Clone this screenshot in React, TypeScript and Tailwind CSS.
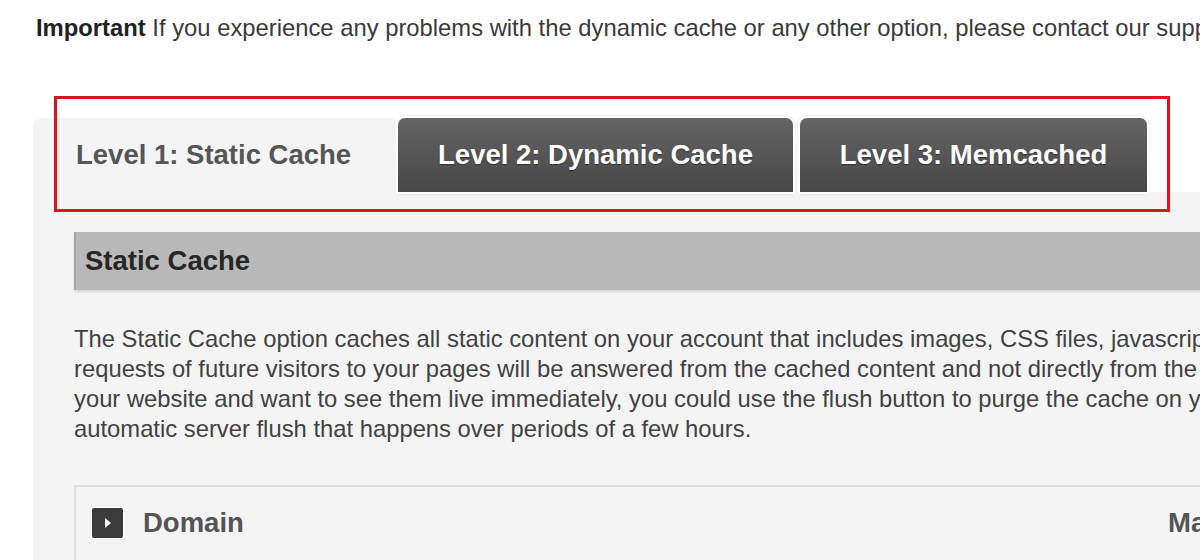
import React from "react";

const lines = [
  "The Static Cache option caches all static content on your account that includes images, CSS files, javascript files and others. This means that",
  "requests of future visitors to your pages will be answered from the cached content and not directly from the server. If you have made changes on",
  "your website and want to see them live immediately, you could use the flush button to purge the cache on your account instead of waiting for the",
  "automatic server flush that happens over periods of a few hours.",
];

function DarkTab({ label, className }: { label: string; className: string }) {
  return (
    <div
      className={`flex h-[74px] items-center justify-center rounded-t-[7px] bg-gradient-to-b from-[#656565] to-[#474747] text-[27.5px] font-bold text-white shadow-[0_0_0_2px_#ffffff,0_0_3px_2px_rgba(0,0,0,0.12)] [text-shadow:0_1px_1px_rgba(0,0,0,0.4)] ${className}`}
    >
      {label}
    </div>
  );
}

export default function App() {
  return (
    <div
      className="relative h-[560px] w-[1200px] overflow-hidden bg-white"
      style={{ fontFamily: '"Liberation Sans", Arial, sans-serif' }}
    >
      <p className="mt-[13px] whitespace-nowrap pl-[36px] text-[23.8px] leading-[30px] text-[#3a3a3a]">
        <b className="text-[#222]">Important</b> If you experience any problems with the dynamic cache or any other
        option, please contact our support team.
      </p>

      <div className="ml-[33px] mt-[75px] w-[1400px]">
        <div className="flex h-[74px] items-stretch bg-white">
          <div className="flex w-[362px] items-center rounded-tl-[8px] bg-[#f4f4f4] pl-[43px] text-[27.5px] font-bold text-[#565656]">
            Level 1: Static Cache
          </div>
          <DarkTab label="Level 2: Dynamic Cache" className="ml-[3px] w-[395px]" />
          <DarkTab label="Level 3: Memcached" className="ml-[7px] w-[347px]" />
        </div>

        <div className="bg-[#f4f4f4] pb-10 pl-[41px] pt-[40px]">
          <div className="flex h-[58px] items-center border-l-2 border-[#a6a6a6] bg-[#b9b9b9] pl-[9px] text-[27.5px] font-bold text-[#262626] shadow-[0_2px_2px_rgba(0,0,0,0.12)]">
            Static Cache
          </div>

          <div className="mt-[34px] text-[23.8px] leading-[30px] text-[#424242]">
            {lines.map((l) => (
              <div key={l} className="whitespace-nowrap">
                {l}
              </div>
            ))}
          </div>

          <div className="mt-[41px] h-[120px] border-l-2 border-t-2 border-[#dedede] pl-[16px] pt-[21px]">
            <div className="flex h-[30px] items-center">
              <div className="flex w-[1076px] items-center gap-[20px]">
                <span className="flex h-[30px] w-[31px] items-center justify-center rounded-[2px] bg-[#3b3b3b] shadow-[0_0_0_1px_#ffffff]">
                  <svg width="8" height="12" viewBox="0 0 8 12">
                    <path d="M1 1 L7 6 L1 11 Z" fill="#ffffff" />
                  </svg>
                </span>
                <span className="text-[27.5px] font-bold text-[#555]">Domain</span>
              </div>
              <span className="whitespace-nowrap text-[27.5px] font-bold text-[#555]">Manage</span>
            </div>
          </div>
        </div>
      </div>

      <div className="pointer-events-none absolute left-[54px] top-[96px] h-[116px] w-[1116px] border-[3px] border-[#e0121e]" />
    </div>
  );
}
